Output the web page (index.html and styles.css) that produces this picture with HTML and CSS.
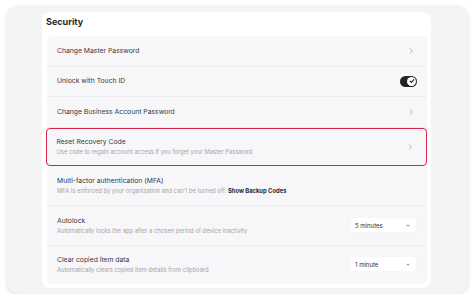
FILE: index.html
```html
<!DOCTYPE html>
<html>
<head>
<meta charset="utf-8">
<link rel="stylesheet" href="styles.css">
</head>
<body>
<div class="frame">
  <div class="card">
    <h2 class="heading">Security</h2>
    <div class="list">
      <div class="row r30">
        <div class="text"><div class="title">Change Master Password</div></div>
        <svg class="chev" viewBox="0 0 6 8"><path d="M2 1.5 L4.5 4 L2 6.5" fill="none" stroke="#b8b8bd" stroke-width="1"/></svg>
      </div>
      <div class="row r30">
        <div class="text"><div class="title">Unlock with Touch ID</div></div>
        <div class="toggle"><span class="knob"><svg viewBox="0 0 8 8"><path d="M2.2 4.2 L3.5 5.5 L5.8 2.6" fill="none" stroke="#1f1f22" stroke-width="1.1" stroke-linecap="round"/></svg></span></div>
      </div>
      <div class="row r31">
        <div class="text"><div class="title">Change Business Account Password</div></div>
        <svg class="chev" viewBox="0 0 6 8"><path d="M2 1.5 L4.5 4 L2 6.5" fill="none" stroke="#b8b8bd" stroke-width="1"/></svg>
      </div>
      <div class="row r37 highlight">
        <div class="text">
          <div class="title">Reset Recovery Code</div>
          <div class="sub">Use code to regain account access if you forget your Master Password</div>
        </div>
        <svg class="chev" viewBox="0 0 6 8"><path d="M2 1.5 L4.5 4 L2 6.5" fill="none" stroke="#b8b8bd" stroke-width="1"/></svg>
      </div>
      <div class="row r40">
        <div class="text">
          <div class="title">Multi-factor authentication (MFA)</div>
          <div class="sub">MFA is enforced by your organization and can't be turned off. <b class="link">Show Backup Codes</b></div>
        </div>
      </div>
      <div class="row r40">
        <div class="text">
          <div class="title">Autolock</div>
          <div class="sub">Automatically locks the app after a chosen period of device inactivity</div>
        </div>
        <div class="select"><span>5 minutes</span><svg viewBox="0 0 8 6"><path d="M2 2 L4 4 L6 2" fill="none" stroke="#55555a" stroke-width="1"/></svg></div>
      </div>
      <div class="row r37 last">
        <div class="text">
          <div class="title">Clear copied item data</div>
          <div class="sub">Automatically clears copied item details from clipboard</div>
        </div>
        <div class="select"><span>1 minute</span><svg viewBox="0 0 8 6"><path d="M2 2 L4 4 L6 2" fill="none" stroke="#55555a" stroke-width="1"/></svg></div>
      </div>
    </div>
  </div>
</div>
</body>
</html>
```
FILE: styles.css
```css
* { box-sizing: border-box; }
html, body { margin: 0; padding: 0; background: #ffffff; }
body { font-family: Inter, "Noto Sans", sans-serif; color: #2e2e33; }
.frame {
  margin: 6px 0 0 7px;
  width: 461px;
  height: 288px;
  background: #f4f4f5;
  border-radius: 12px;
  box-shadow: 0 1px 4px rgba(0,0,0,0.12), 0 0 1px rgba(0,0,0,0.08);
  padding: 6px 37px 6px 35px;
}
.card {
  background: #ffffff;
  border-radius: 8px;
  height: 100%;
  padding: 3px 4px 4px 5px;
  display: flex;
  flex-direction: column;
}
.heading {
  margin: 0 0 0 -1px;
  font-size: 9px;
  font-weight: 700;
  line-height: 13px;
  height: 21px;
  color: #26262b;
}
.list {
  background: #f7f7f9;
  border-radius: 6px;
  display: flex;
  flex-direction: column;
  flex: 1;
}
.row {
  display: flex;
  align-items: center;
  padding: 0 12px 0 10px;
  border-bottom: 1px solid #ececef;
}
.row.last { border-bottom: none; }
.r30 { height: 30.5px; }
.r31 { height: 31px; }
.r37 { height: 37.5px; }
.r40 { height: 40px; }
.highlight {
  border: 1.5px solid #d8234a;
  border-radius: 4px;
  margin: 0 0 0 -1px;
  padding-left: 9.5px;
}
.text { flex: 1; min-width: 0; }
.title { font-size: 6.8px; line-height: 10px; color: #38383d; }
.sub { font-size: 5.85px; line-height: 9px; color: #a4a4aa; white-space: nowrap; }
.link { color: #2a2a2e; font-weight: 700; }
.chev { width: 6px; height: 8px; margin-right: 1px; }
.toggle {
  width: 17px; height: 11px;
  background: #232326;
  border-radius: 6px;
  position: relative;
  margin-right: -2px;
}
.knob {
  position: absolute; right: 1px; top: 1px;
  width: 9px; height: 9px; border-radius: 50%;
  background: #ffffff;
  display: flex; align-items: center; justify-content: center;
}
.knob svg { width: 8px; height: 8px; }
.select {
  width: 65px; height: 14px;
  background: #ffffff;
  border-radius: 3px;
  display: flex; align-items: center; justify-content: space-between;
  padding: 0 5px 0 4px;
  font-size: 6px;
  color: #2e2e33;
  margin-right: -1px;
  box-shadow: 0 0 1px rgba(0,0,0,0.06);
}
.select svg { width: 6px; height: 5px; }
```
